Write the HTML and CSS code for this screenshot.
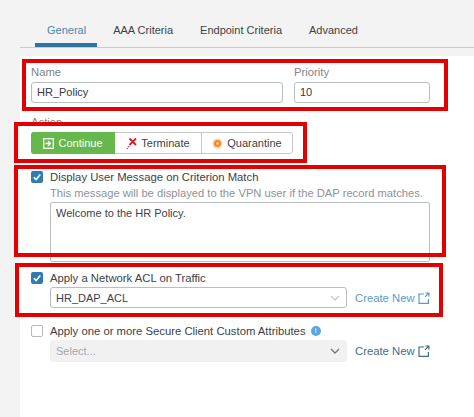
FILE: index.html
```html
<!DOCTYPE html>
<html lang="en">
<head>
    <meta charset="UTF-8">
    <meta name="viewport" content="width=device-width, initial-scale=1.0">
    <title>DAP Policy</title>
    <link rel="stylesheet" href="styles.css">
</head>
<body>
    <div class="page">
        <div class="tabs">
            <div class="tab active">General</div>
            <div class="tab">AAA Criteria</div>
            <div class="tab">Endpoint Criteria</div>
            <div class="tab">Advanced</div>
        </div>

        <div class="form">
            <div class="row-top">
                <div class="field-name">
                    <div class="label">Name</div>
                    <div class="input">HR_Policy</div>
                </div>
                <div class="field-priority">
                    <div class="label">Priority</div>
                    <div class="input">10</div>
                </div>
            </div>

            <div class="label action-label">Action</div>
            <div class="btn-group">
                <div class="btn btn-continue">
                    <svg width="11" height="11" viewBox="0 0 11 11" fill="none" stroke="#fff" stroke-width="1.3">
                        <rect x="0.7" y="0.7" width="9.6" height="9.6"/>
                        <path d="M2.5 5.5h4.5M5 3l2.5 2.5L5 8"/>
                    </svg>
                    Continue
                </div>
                <div class="btn btn-terminate">
                    <svg width="11" height="13" viewBox="0 0 11 13" fill="none" stroke="#d3222a" stroke-width="1.9">
                        <path d="M3.5 1.5l6.5 6.5M10 1.5L3.5 8"/>
                        <path d="M3 9l-2 3" stroke="#b03060" stroke-width="1.2" stroke-dasharray="1.5 1"/>
                    </svg>
                    Terminate
                </div>
                <div class="btn btn-quarantine">
                    <svg width="11" height="11" viewBox="0 0 12 12">
                        <circle cx="6" cy="6" r="5.6" fill="#f8d9b8"/>
                        <circle cx="6" cy="6" r="3.8" fill="#f08a24"/>
                        <circle cx="6" cy="6" r="1.4" fill="#fbe3c8"/>
                    </svg>
                    Quarantine
                </div>
            </div>

            <div class="check-row check-message">
                <span class="checkbox checked"><svg width="12" height="12" viewBox="0 0 12 12"><path d="M2.8 6.2l2.3 2.4 4.2-5" fill="none" stroke="#fff" stroke-width="1.6"/></svg></span>
                <span class="check-label">Display User Message on Criterion Match</span>
            </div>
            <div class="indent">
                <div class="hint">This message will be displayed to the VPN user if the DAP record matches.</div>
                <div class="textarea">Welcome to the HR Policy.</div>
            </div>

            <div class="check-row check-acl">
                <span class="checkbox checked"><svg width="12" height="12" viewBox="0 0 12 12"><path d="M2.8 6.2l2.3 2.4 4.2-5" fill="none" stroke="#fff" stroke-width="1.6"/></svg></span>
                <span class="check-label">Apply a Network ACL on Traffic</span>
            </div>
            <div class="select-row">
                <div class="select">
                    <span>HR_DAP_ACL</span>
                    <svg width="10" height="6" viewBox="0 0 10 6" fill="none" stroke="#c4c8cc" stroke-width="1.3"><path d="M1 1l4 4 4-4"/></svg>
                </div>
                <a class="create-new">Create New
                    <svg width="12" height="12" viewBox="0 0 12 12" fill="none" stroke="currentColor" stroke-width="1.2"><path d="M6 2H1v9.4h9.4V7M7.5 1h3.4v3.4M10.9 1L7 4.9"/></svg>
                </a>
            </div>

            <div class="check-row check-attrs">
                <span class="checkbox"></span>
                <span class="check-label">Apply one or more Secure Client Custom Attributes</span>
                <span class="info">i</span>
            </div>
            <div class="select-row">
                <div class="select disabled">
                    <span>Select...</span>
                    <svg width="10" height="6" viewBox="0 0 10 6" fill="none" stroke="#6f7880" stroke-width="1.3"><path d="M1 1l4 4 4-4"/></svg>
                </div>
                <a class="create-new dark">Create New
                    <svg width="12" height="12" viewBox="0 0 12 12" fill="none" stroke="currentColor" stroke-width="1.2"><path d="M6 2H1v9.4h9.4V7M7.5 1h3.4v3.4M10.9 1L7 4.9"/></svg>
                </a>
            </div>
        </div>

        <!-- red annotation boxes drawn on top of the form -->
        <div class="mark mark-name"></div>
        <div class="mark mark-action"></div>
        <div class="mark mark-message"></div>
        <div class="mark mark-acl"></div>
    </div>
</body>
</html>
```

FILE: styles.css
```css
html, body {
    margin: 0;
    padding: 0;
}
body {
    font-family: "Liberation Sans", Arial, sans-serif;
    font-size: 11.3px;
    color: #3c4248;
    background-color: #f3f3f3;
}
.page {
    position: relative;
    width: 474px;
    height: 417px;
    overflow: hidden;
}
.tabs {
    display: flex;
    height: 47px;
    margin-left: 20px;
    padding-left: 15px;
    font-size: 11px;
    border-bottom: 1px solid #c9cdd0;
}
.tab {
    padding: 23px 13.5px 0;
    height: 24px;
    line-height: 14px;
}
.tab.active {
    height: 20px;
    margin-right: 2.5px;
    color: #4a87ad;
    padding-left: 12px;
    padding-right: 11px;
    border-bottom: 4px solid #2f739f;
}
.form {
    margin-top: 8px;
    margin-left: 20px;
    height: 361px;
    padding: 9px 0 0 11px;
    background-color: #fff;
}
.label {
    color: #80868c;
    line-height: 14px;
}
.row-top {
    display: flex;
    gap: 11px;
}
.field-name {
    width: 252px;
}
.field-priority {
    width: 136px;
}
.input {
    box-sizing: border-box;
    height: 21px;
    margin-top: 3px;
    padding-left: 5px;
    font-size: 11px;
    line-height: 19px;
    color: #33393f;
    border: 1px solid #b9bec2;
    border-radius: 3px;
}
.action-label {
    margin-top: 12px;
}
.btn-group {
    display: flex;
    width: 262px;
    height: 22px;
    margin-top: 3px;
    box-sizing: border-box;
    font-size: 11px;
    border: 1px solid #c3c8cc;
    border-radius: 3px;
}
.btn {
    display: flex;
    align-items: center;
    justify-content: center;
    gap: 4px;
    line-height: 20px;
}
.btn-continue {
    width: 84px;
    margin: -1px 0 -1px -1px;
    color: #fff;
    background-color: #66b74c;
    border-radius: 3px 0 0 3px;
}
.btn-terminate {
    width: 86px;
    border-right: 1px solid #c3c8cc;
}
.btn-quarantine {
    flex: 1;
}
.check-row {
    display: flex;
    align-items: center;
    height: 14px;
}
.check-message {
    margin-top: 16px;
}
.check-acl {
    margin-top: 9px;
}
.check-attrs {
    margin-top: 16px;
}
.checkbox {
    box-sizing: border-box;
    flex: none;
    width: 12px;
    height: 12px;
    margin-right: 7px;
    background-color: #fff;
    border: 1px solid #b4b9bd;
    border-radius: 2px;
}
.checkbox.checked {
    background-color: #2f7cb3;
    border: none;
}
.checkbox svg {
    display: block;
}
.indent {
    margin-left: 19px;
}
.hint {
    margin-top: 2px;
    font-size: 11.2px;
    color: #8d9297;
    line-height: 14px;
}
.textarea {
    box-sizing: border-box;
    width: 380px;
    height: 60px;
    margin-top: 2px;
    padding: 3px 5px;
    font-size: 11px;
    line-height: 14px;
    border: 1px solid #b9bec2;
    border-radius: 2px;
}
.select-row {
    display: flex;
    align-items: center;
    margin-top: 2px;
    margin-left: 19px;
}
.select {
    box-sizing: border-box;
    display: flex;
    align-items: center;
    justify-content: space-between;
    width: 297px;
    height: 21px;
    padding: 0 6px 0 5px;
    font-size: 11px;
    border: 1px solid #b9bec2;
    border-radius: 3px;
}
.select.disabled {
    height: 22px;
    color: #a4a8ac;
    background-color: #f1f1f1;
    border-color: #f1f1f1;
}
.create-new {
    display: flex;
    align-items: center;
    gap: 3px;
    margin-left: 8px;
    color: #5b9cc6;
}
.create-new.dark {
    color: #3f6d8c;
}
.info {
    width: 10px;
    height: 10px;
    margin-left: 5px;
    color: #fff;
    font-size: 8px;
    line-height: 10px;
    text-align: center;
    background-color: #55a9dc;
    border-radius: 50%;
}
.mark {
    position: absolute;
    box-sizing: border-box;
    border: 4px solid #e30000;
}
.mark-name {
    left: 22px;
    top: 59px;
    width: 426px;
    height: 52px;
}
.mark-action {
    left: 14px;
    top: 122px;
    width: 293px;
    height: 41px;
}
.mark-message {
    left: 14px;
    top: 165px;
    width: 432px;
    height: 92px;
}
.mark-acl {
    left: 15px;
    top: 263px;
    width: 428px;
    height: 54px;
}
```
